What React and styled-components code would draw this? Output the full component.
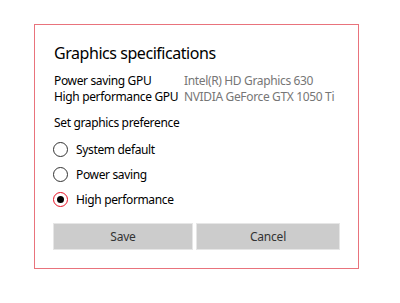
import { Fragment } from "react";
import styled, { createGlobalStyle } from "styled-components";

const GlobalStyle = createGlobalStyle`
	body {
		margin: 0;
		background: #fff;
		font-family: "Segoe UI", "Noto Sans", "Open Sans", sans-serif;
		color: #000;
	}
`;

const options = ["System default", "Power saving", "High performance"];

const gpus = [
	{ label: "Power saving GPU", value: "Intel(R) HD Graphics 630" },
	{ label: "High performance GPU", value: "NVIDIA GeForce GTX 1050 Ti" },
];

const Page = styled.div`
	width: 400px;
	height: 303px;
	padding: 24px 0 0 34px;
	box-sizing: border-box;
`;

const Dialog = styled.div`
	width: 325px;
	height: 245px;
	box-sizing: border-box;
	border: 1px solid #e9737c;
	padding: 16px 18px 0 18px;
	display: flex;
	flex-direction: column;
`;

const Title = styled.h2`
	margin: 0 0 8px 1px;
	font-size: 16px;
	font-weight: 400;
	line-height: 24px;
	letter-spacing: -0.45px;
`;

const SpecGrid = styled.div`
	display: grid;
	grid-template-columns: 130px auto;
	font-size: 12px;
	line-height: 16px;
	margin-left: 1px;
	letter-spacing: -0.35px;
`;

const SpecValue = styled.span`
	color: #767676;
`;

const Heading = styled.div`
	margin: 9px 0 5px 1px;
	font-size: 12px;
	line-height: 18px;
	letter-spacing: -0.35px;
`;

const RadioList = styled.div`
	display: flex;
	flex-direction: column;
`;

const RadioRow = styled.label`
	display: flex;
	align-items: center;
	gap: 8px;
	height: 25px;
	font-size: 12px;
	letter-spacing: -0.35px;
`;

const Circle = styled.span`
	width: 15px;
	height: 15px;
	box-sizing: border-box;
	border-radius: 50%;
	border: 1.6px solid ${(p) => (p.checked ? "#e81123" : "#333")};
	display: flex;
	align-items: center;
	justify-content: center;

	&::after {
		content: "";
		width: 7px;
		height: 7px;
		border-radius: 50%;
		background: #000;
		display: ${(p) => (p.checked ? "block" : "none")};
	}
`;

const Buttons = styled.div`
	display: grid;
	grid-template-columns: 140px 1fr;
	gap: 3px;
	margin-top: 11px;
`;

const Button = styled.button`
	height: 27px;
	background: #cccccc;
	border: 1px solid #e6e6e6;
	font-family: inherit;
	font-size: 12px;
	color: #333;
	letter-spacing: -0.2px;
	padding: 0;
`;

const App = () => {
	return (
		<Page>
			<GlobalStyle />
			<Dialog>
				<Title>Graphics specifications</Title>
				<SpecGrid>
					{gpus.map((g) => (
						<Fragment key={g.label}>
							<span>{g.label}</span>
							<SpecValue>{g.value}</SpecValue>
						</Fragment>
					))}
				</SpecGrid>
				<Heading>Set graphics preference</Heading>
				<RadioList>
					{options.map((o) => (
						<RadioRow key={o}>
							<Circle checked={o === "High performance"} />
							{o}
						</RadioRow>
					))}
				</RadioList>
				<Buttons>
					<Button>Save</Button>
					<Button>Cancel</Button>
				</Buttons>
			</Dialog>
		</Page>
	);
};

export default App;
